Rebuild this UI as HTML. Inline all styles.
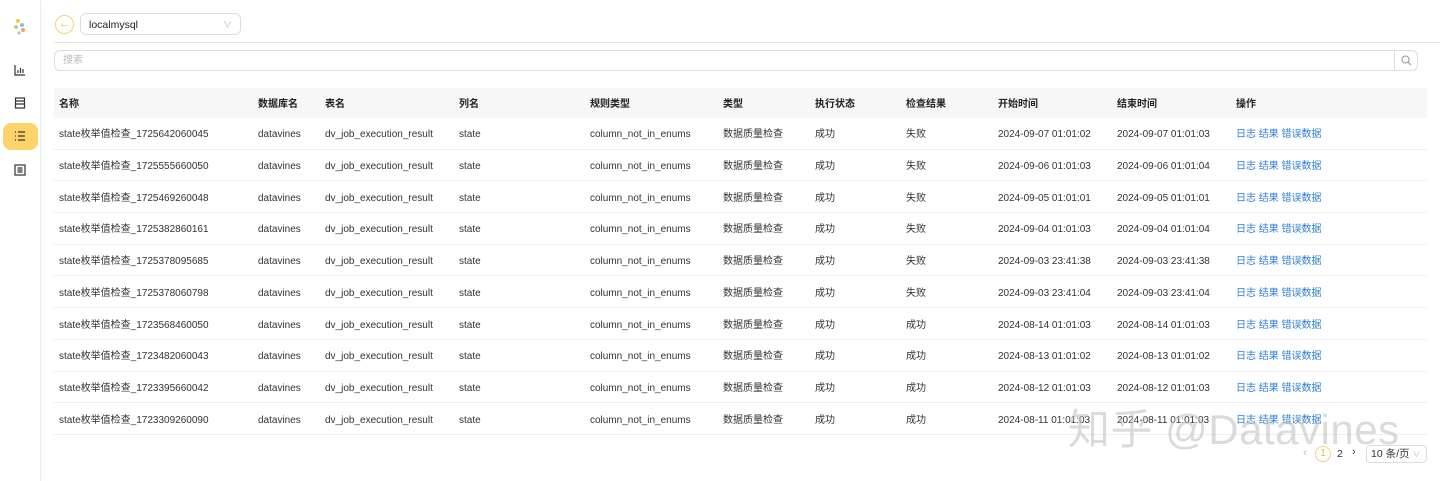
<!DOCTYPE html>
<html><head><meta charset="utf-8"><style>
*{box-sizing:border-box;margin:0;padding:0}
body{width:1440px;height:481px;overflow:hidden;background:#fff;font-family:"Liberation Sans","Noto Sans CJK SC",sans-serif;font-size:10px;color:#333;position:relative}
.side{position:absolute;left:0;top:0;width:41px;height:481px;border-right:1px solid #eee;box-shadow:1px 0 4px rgba(0,0,0,.04)}
.ic{position:absolute;left:14px;width:12px;height:12px}
.abs{position:absolute}
.row{position:absolute;left:54px;width:1373px;height:31.7px;border-bottom:1px solid #eee}
.row span{position:absolute;top:calc(50% + 2px);transform:translateY(-50%);white-space:nowrap;line-height:12px}
.hd{background:#f7f7f7;font-weight:bold;color:#222;border-bottom:none}
.lk{color:#2f7fd6}
</style></head><body>
<div class="side">
<svg class="abs" style="left:11px;top:17px" width="18" height="20" viewBox="0 0 18 20"><circle cx="7" cy="4" r="2" fill="#f2c94c"/><circle cx="11" cy="8" r="2" fill="#7bc8d8"/><circle cx="5" cy="10" r="2" fill="#b7d37a"/><circle cx="12" cy="13" r="2" fill="#f3a35c"/><circle cx="8" cy="16" r="1.6" fill="#9ec7e8"/></svg>
<svg class="ic" style="top:64px" viewBox="0 0 12 12" fill="none" stroke="#333" stroke-width="1.2"><path d="M1 1v10h10M4 9V6M6.5 9V4M9 9V5"/></svg>
<svg class="ic" style="top:97px" viewBox="0 0 12 12" fill="none" stroke="#333" stroke-width="1.2"><rect x="1.5" y="1" width="9" height="10"/><path d="M1.5 4h9M1.5 7h9"/></svg>
<div class="abs" style="left:3px;top:123px;width:35px;height:27px;background:#fcd469;border-radius:8px"></div>
<svg class="ic" style="top:130px" viewBox="0 0 12 12" fill="none" stroke="#333" stroke-width="1.2"><path d="M1 2h1M1 6h1M1 10h1M4 2h7M4 6h7M4 10h7"/></svg>
<svg class="ic" style="top:164px" viewBox="0 0 12 12" fill="none" stroke="#333" stroke-width="1.2"><rect x="1" y="1" width="10" height="10"/><path d="M3.5 4h5M3.5 6h5M3.5 8h5"/></svg>
</div>
<div class="abs" style="left:55px;top:15px;width:19px;height:19px;border:1px solid #f3d27a;border-radius:50%;color:#e8b84a;font-size:11px;text-align:center;line-height:17px">←</div>
<div class="abs" style="left:80px;top:13px;width:161px;height:22px;border:1px solid #ddd;border-radius:6px;padding-left:8px;line-height:22px;font-size:10.5px;color:#222">localmysql<span style="position:absolute;right:8px;color:#bbb;font-size:9px">∨</span></div>
<div class="abs" style="left:54px;top:42px;width:1386px;height:1px;background:#e4e4e4"></div>
<div class="abs" style="left:54px;top:50px;width:1364px;height:21px;border:1px solid #ddd;border-radius:6px;padding-left:8px;line-height:20px;color:#bbb;font-size:10px">搜索
<div style="position:absolute;right:0;top:0;width:23px;height:19px;border-left:1px solid #ddd"><svg style="position:absolute;left:6px;top:4px" width="11" height="11" viewBox="0 0 11 11" fill="none" stroke="#999" stroke-width="1.1"><circle cx="4.5" cy="4.5" r="3.5"/><path d="M7 7l3 3"/></svg></div></div>
<div class="row hd" style="top:88px;height:30px"><span style="left:5px">名称</span><span style="left:204px">数据库名</span><span style="left:271px">表名</span><span style="left:405px">列名</span><span style="left:536px">规则类型</span><span style="left:669px">类型</span><span style="left:761px">执行状态</span><span style="left:852px">检查结果</span><span style="left:944px">开始时间</span><span style="left:1063px">结束时间</span><span style="left:1182px">操作</span></div>
<div id="rows"></div>
<div class="abs" style="left:1068px;top:396px;font-size:42px;color:rgba(190,190,190,.55);white-space:nowrap;letter-spacing:0.5px">知乎 @Datavines</div>
<div class="abs" style="left:1303px;top:447px;color:#bbb;font-size:11px">‹</div>
<div class="abs" style="left:1315px;top:446px;width:16px;height:16px;border:1px solid #f3d27a;border-radius:50%;color:#e8b84a;text-align:center;line-height:14px;font-size:10px">1</div>
<div class="abs" style="left:1337px;top:448px;font-size:10.5px">2</div>
<div class="abs" style="left:1352px;top:446px;font-size:11px">›</div>
<div class="abs" style="left:1366px;top:445px;width:61px;height:18px;border:1px solid #ddd;border-radius:4px;padding-left:4px;line-height:16px;font-size:10.5px">10 条/页<span style="color:#bbb;font-size:8px;margin-left:3px">∨</span></div>
<script>
var d=[["1725642060045","失败","2024-09-07 01:01:02","2024-09-07 01:01:03"],["1725555660050","失败","2024-09-06 01:01:03","2024-09-06 01:01:04"],["1725469260048","失败","2024-09-05 01:01:01","2024-09-05 01:01:01"],["1725382860161","失败","2024-09-04 01:01:03","2024-09-04 01:01:04"],["1725378095685","失败","2024-09-03 23:41:38","2024-09-03 23:41:38"],["1725378060798","失败","2024-09-03 23:41:04","2024-09-03 23:41:04"],["1723568460050","成功","2024-08-14 01:01:03","2024-08-14 01:01:03"],["1723482060043","成功","2024-08-13 01:01:02","2024-08-13 01:01:02"],["1723395660042","成功","2024-08-12 01:01:03","2024-08-12 01:01:03"],["1723309260090","成功","2024-08-11 01:01:03","2024-08-11 01:01:03"]];
var h="";d.forEach(function(r,i){h+='<div class="row" style="top:'+(118+i*31.7)+'px"><span style="left:5px">state枚举值检查_'+r[0]+'</span><span style="left:204px">datavines</span><span style="left:271px">dv_job_execution_result</span><span style="left:405px">state</span><span style="left:536px">column_not_in_enums</span><span style="left:669px">数据质量检查</span><span style="left:761px">成功</span><span style="left:852px">'+r[1]+'</span><span style="left:944px">'+r[2]+'</span><span style="left:1063px">'+r[3]+'</span><span class="lk" style="left:1182px">日志 结果 错误数据</span></div>'});
document.getElementById("rows").innerHTML=h;
</script>
</body></html>
